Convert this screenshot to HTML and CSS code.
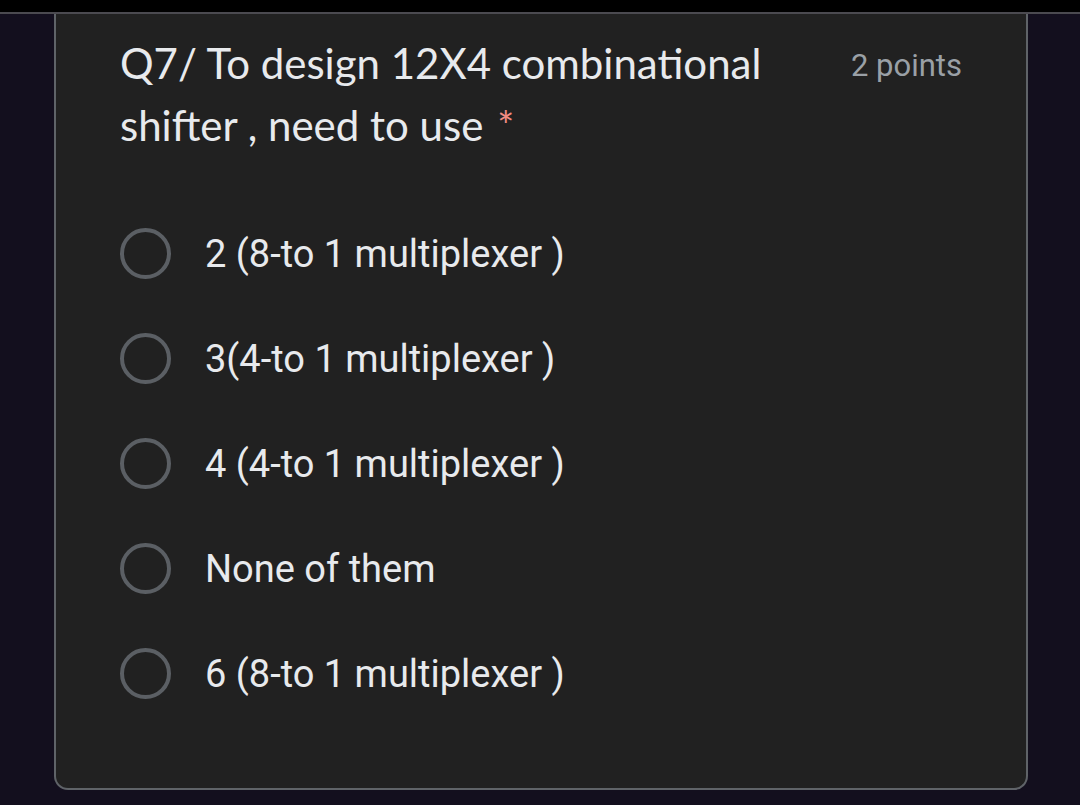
FILE: index.html
```html
<!DOCTYPE html>
<html>
<head>
<meta charset="utf-8">
<link rel="stylesheet" href="styles.css">
</head>
<body>
<div class="topbar"></div>
<div class="card">
  <div class="header">
    <div class="title">Q7/ To design 12X4 combinational shifter , need to use<span class="req">*</span></div>
    <div class="points">2 points</div>
  </div>
  <div class="options">
    <div class="option"><span class="radio"></span><span class="label">2 (8-to 1 multiplexer )</span></div>
    <div class="option"><span class="radio"></span><span class="label">3(4-to 1 multiplexer )</span></div>
    <div class="option"><span class="radio"></span><span class="label">4 (4-to 1 multiplexer )</span></div>
    <div class="option"><span class="radio"></span><span class="label">None of them</span></div>
    <div class="option"><span class="radio"></span><span class="label">6 (8-to 1 multiplexer )</span></div>
  </div>
</div>
</body>
</html>
```
FILE: styles.css
```css
html, body {
  margin: 0;
  padding: 0;
  background: #130f1e;
  height: 805px;
  overflow: hidden;
}
.topbar {
  height: 12px;
  background: #000;
  border-bottom: 2px solid #4b4a50;
}
.card {
  margin: 0 52px 0 54px;
  height: 776px;
  background: #212121;
  border: 2px solid #5f6368;
  border-top: none;
  border-radius: 0 0 14px 14px;
  box-sizing: border-box;
  padding: 18px 64px 0 64px;
}
.header {
  display: flex;
  justify-content: space-between;
  align-items: flex-start;
}
.title {
  width: 690px;
  font-family: "Lato", sans-serif;
  font-size: 42px;
  line-height: 62px;
  color: #e8eaed;
}
.req {
  color: #f28b82;
  font-size: 40px;
  margin-left: 14px;
  vertical-align: 0;
}
.points {
  font-family: "Roboto", sans-serif;
  font-size: 31px;
  line-height: 62px;
  color: #9aa0a6;
  padding-top: 3px;
}
.options {
  margin-top: 44px;
  display: flex;
  flex-direction: column;
}
.option {
  display: flex;
  align-items: center;
  height: 105px;
}
.radio {
  width: 51px;
  height: 51px;
  border: 4px solid #5b5f64;
  border-radius: 50%;
  box-sizing: border-box;
  margin-right: 34px;
  flex: none;
}
.label {
  font-family: "Roboto", sans-serif;
  font-size: 38px;
  color: #e8eaed;
}
```
